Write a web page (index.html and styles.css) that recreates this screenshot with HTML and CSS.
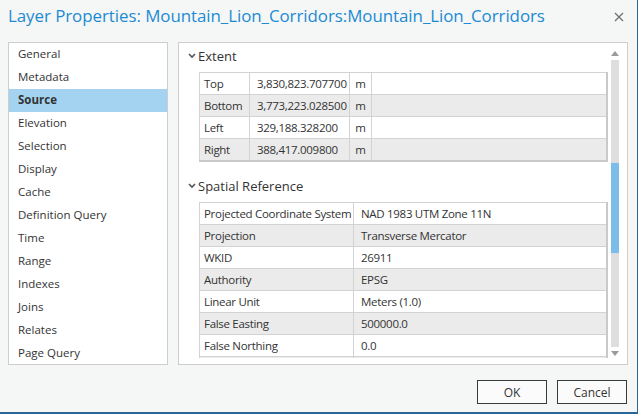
FILE: index.html
```html
<!DOCTYPE html>
<html lang="en">
<head>
    <meta charset="UTF-8"/>
    <title>Layer Properties</title>
    <link rel="stylesheet" href="styles.css">
</head>
<body>
<div class="dialog">
    <!-- title bar -->
    <div class="titlebar">
        <div class="title">Layer Properties: Mountain_Lion_Corridors:Mountain_Lion_Corridors</div>
        <svg class="close" width="10" height="10" viewBox="0 0 10 10">
            <path d="M1 1L9 9M9 1L1 9" stroke="#707070" stroke-width="1.3"/>
        </svg>
    </div>

    <div class="main">
        <!-- left nav -->
        <div class="nav">
            <div class="nav-item">General</div>
            <div class="nav-item">Metadata</div>
            <div class="nav-item selected">Source</div>
            <div class="nav-item">Elevation</div>
            <div class="nav-item">Selection</div>
            <div class="nav-item">Display</div>
            <div class="nav-item">Cache</div>
            <div class="nav-item">Definition Query</div>
            <div class="nav-item">Time</div>
            <div class="nav-item">Range</div>
            <div class="nav-item">Indexes</div>
            <div class="nav-item">Joins</div>
            <div class="nav-item">Relates</div>
            <div class="nav-item">Page Query</div>
        </div>

        <!-- source page -->
        <div class="panel">
            <div class="scroll-content">
                <div class="section-head">
                    <svg class="chevron" width="8" height="6" viewBox="0 0 8 6"><path d="M1 1L4 4L7 1" fill="none" stroke="#555" stroke-width="1.6"/></svg>
                    Extent
                </div>
                <table class="grid extent">
                    <colgroup><col class="c1"><col class="c2"><col class="c3"><col></colgroup>
                    <tr><td>Top</td><td>3,830,823.707700</td><td class="unit">m</td><td></td></tr>
                    <tr class="alt"><td>Bottom</td><td>3,773,223.028500</td><td class="unit">m</td><td></td></tr>
                    <tr><td>Left</td><td>329,188.328200</td><td class="unit">m</td><td></td></tr>
                    <tr class="alt"><td>Right</td><td>388,417.009800</td><td class="unit">m</td><td></td></tr>
                </table>

                <div class="section-head">
                    <svg class="chevron" width="8" height="6" viewBox="0 0 8 6"><path d="M1 1L4 4L7 1" fill="none" stroke="#555" stroke-width="1.6"/></svg>
                    Spatial Reference
                </div>
                <table class="grid spatial">
                    <colgroup><col class="k"><col></colgroup>
                    <tr><td>Projected Coordinate System</td><td>NAD 1983 UTM Zone 11N</td></tr>
                    <tr class="alt"><td>Projection</td><td>Transverse Mercator</td></tr>
                    <tr><td>WKID</td><td>26911</td></tr>
                    <tr class="alt"><td>Authority</td><td>EPSG</td></tr>
                    <tr><td>Linear Unit</td><td>Meters (1.0)</td></tr>
                    <tr class="alt"><td>False Easting</td><td>500000.0</td></tr>
                    <tr><td>False Northing</td><td>0.0</td></tr>
                    <tr class="alt"><td></td><td></td></tr>
                </table>
            </div>

            <div class="scrollbar">
                <div class="arrow up"></div>
                <div class="track"><div class="thumb"></div></div>
                <div class="arrow down"></div>
            </div>
        </div>
    </div>

    <div class="buttons">
        <button class="btn">OK</button>
        <button class="btn">Cancel</button>
    </div>
</div>
</body>
</html>
```

FILE: styles.css
```css
body {
    margin: 0;
    font-family: "Open Sans", "Noto Sans", sans-serif;
    color: #333;
}

.dialog {
    width: 637px;
    height: 412px;
    background-color: #f5f6f6;
    border-right: 1px solid #2a6598;
    border-bottom: 2px solid #2a6598;
    display: flex;
    flex-direction: column;
}

.titlebar {
    height: 42px;
    display: flex;
    align-items: center;
    justify-content: space-between;
    padding: 0 13px 11px 8px;
    box-sizing: border-box;
}

.title {
    font-size: 16.9px;
    color: #1b8bd2;
    letter-spacing: -0.05px;
}

.close {
    margin-top: 2px;
}

.main {
    display: flex;
    gap: 10px;
    padding-left: 8px;
    height: 323px;
}

.nav {
    width: 160px;
    box-sizing: border-box;
    background-color: #fff;
    border: 1px solid #cdcdcd;
}

.nav-item {
    height: 23px;
    line-height: 22px;
    padding-left: 9px;
    font-size: 11.5px;
    color: #333;
}

.nav-item.selected {
    background-color: #a3d3f1;
    font-weight: bold;
}

.panel {
    width: 450px;
    box-sizing: border-box;
    background-color: #fff;
    border: 1px solid #cdcdcd;
    display: flex;
}

.scroll-content {
    width: 429px;
    height: 315px;
    overflow: hidden;
    padding-top: 1px;
    box-sizing: border-box;
}

.section-head {
    height: 24px;
    display: flex;
    align-items: center;
    font-size: 13px;
    color: #333;
    padding-left: 9px;
}

.chevron {
    margin-right: 2px;
}

.grid {
    border-collapse: collapse;
    table-layout: fixed;
    margin-left: 20px;
    margin-top: 4px;
    width: 409px;
    font-size: 11.5px;
    letter-spacing: -0.3px;
    color: #333;
    border-bottom: 2px solid #c9c9c9;
    border-right: 2px solid #c9c9c9;
}

.grid td {
    border: 1px solid #d3d3d3;
    height: 21px;
    padding: 0 4px;
    white-space: nowrap;
    overflow: hidden;
}

.grid td + td {
    padding-left: 7px;
}

.grid td.unit {
    padding: 0;
    text-align: center;
}

.grid tr.alt td {
    background-color: #ebebeb;
}

.extent {
    margin-bottom: 12px;
}

.extent .c1 { width: 50px; }
.extent .c2 { width: 100px; }
.extent .c3 { width: 22px; }

.spatial .k { width: 154px; }

.scrollbar {
    width: 19px;
    padding: 8px 7px 8px 2px;
    box-sizing: border-box;
    display: flex;
    flex-direction: column;
    align-items: center;
    gap: 4px;
}

.arrow {
    width: 0;
    height: 0;
    border-left: 4px solid transparent;
    border-right: 4px solid transparent;
}

.arrow.up {
    border-bottom: 5px solid #9a9a9a;
}

.arrow.down {
    border-top: 5px solid #9a9a9a;
}

.track {
    flex: 1;
    width: 8px;
    background-color: #dedede;
}

.thumb {
    margin-top: 103px;
    height: 90px;
    background-color: #7bbde8;
}

.buttons {
    display: flex;
    justify-content: flex-end;
    gap: 10px;
    padding: 15px 10px 0 0;
}

.btn {
    width: 70px;
    height: 24px;
    font-family: "Open Sans", "Noto Sans", sans-serif;
    font-size: 12px;
    color: #333;
    background-color: #fbfbfb;
    border: 1px solid #3a3a3a;
    padding: 0;
}
```
